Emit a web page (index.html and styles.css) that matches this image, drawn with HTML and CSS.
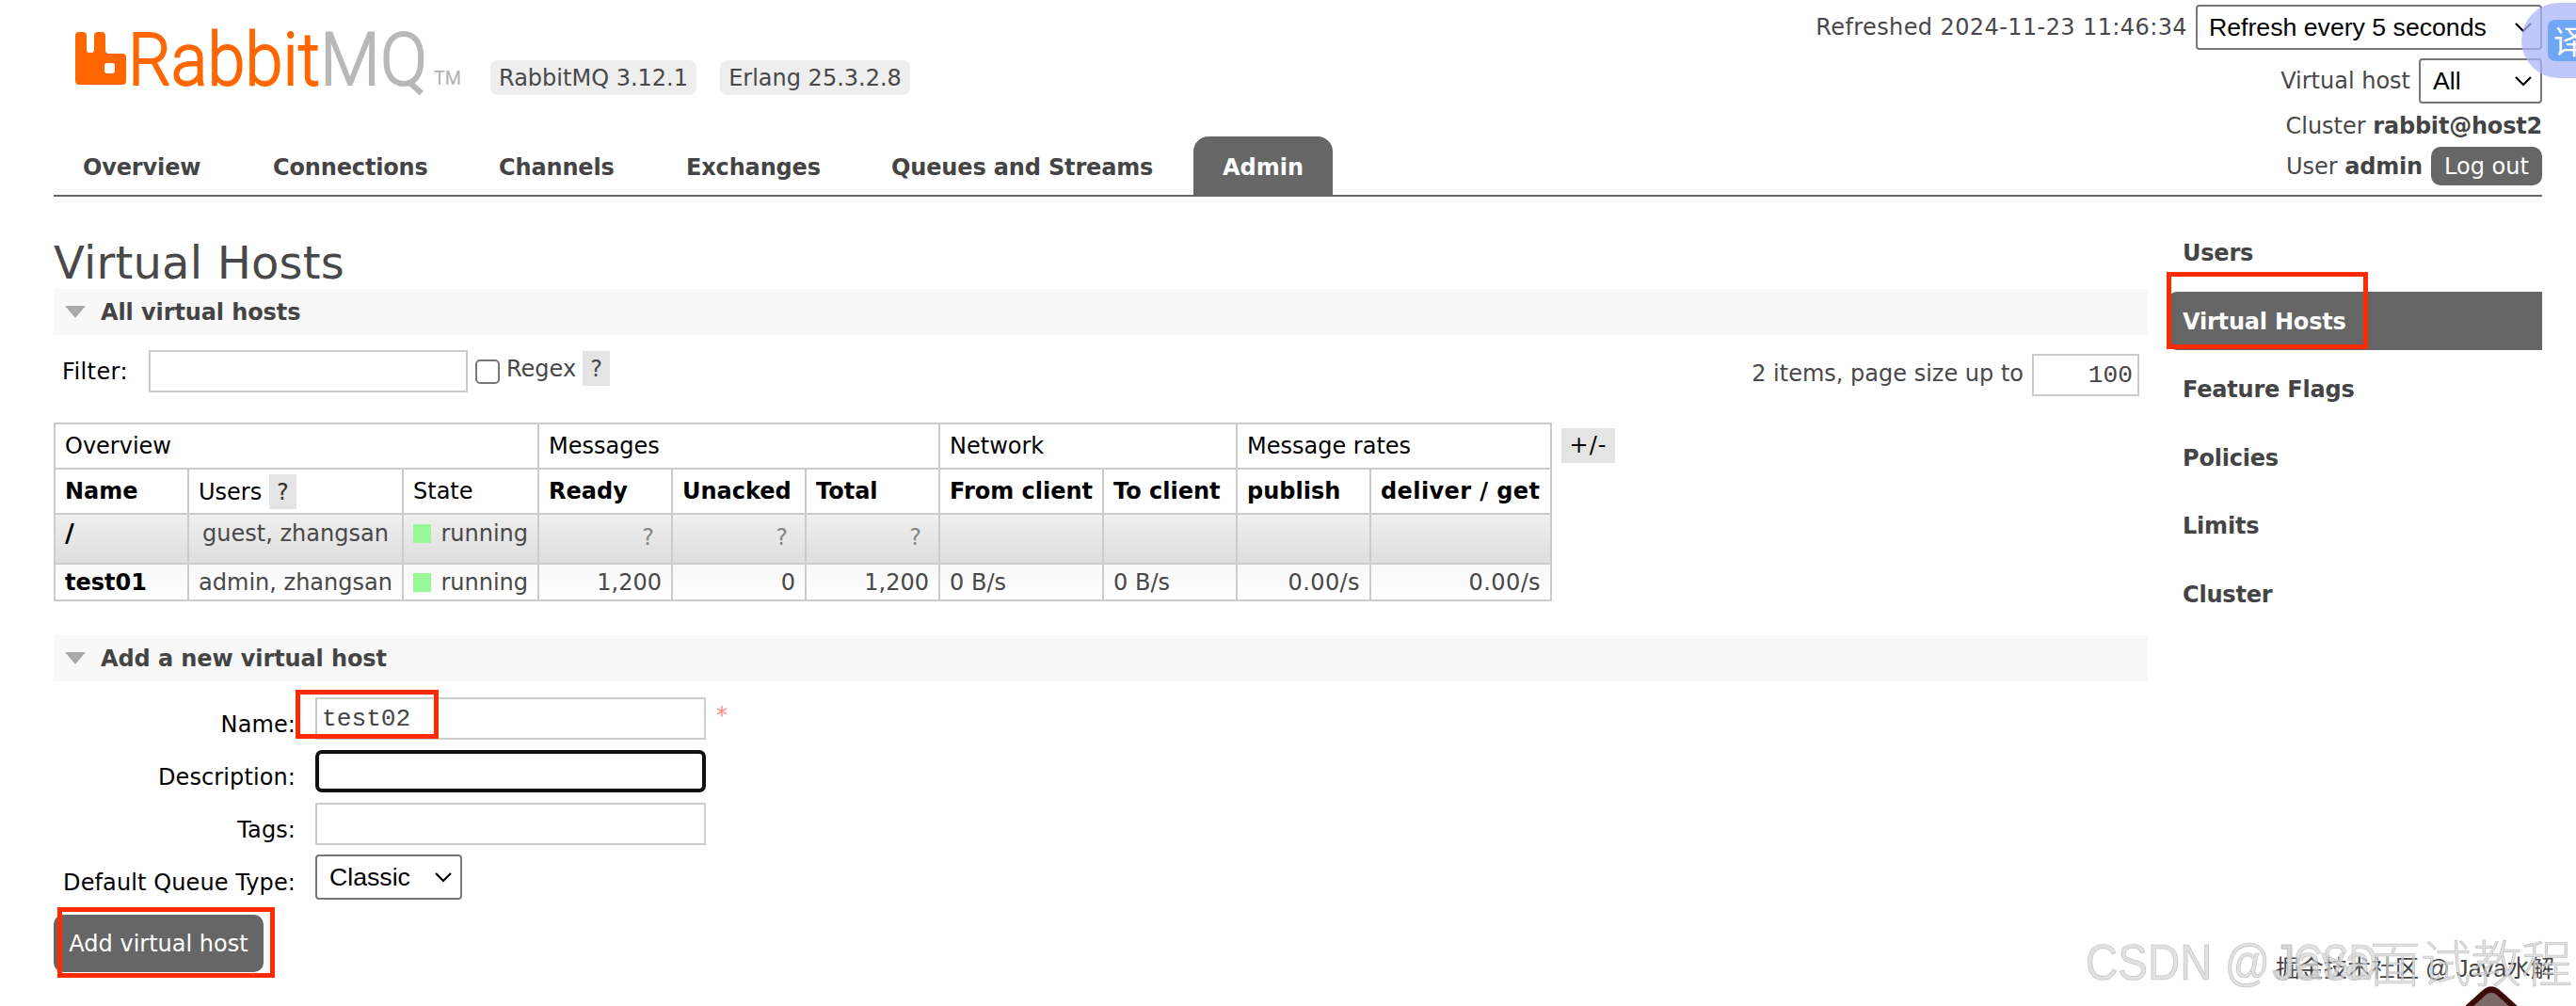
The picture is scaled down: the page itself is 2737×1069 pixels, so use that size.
FILE: index.html
```html
<!DOCTYPE html>
<html lang="en">
<head>
    <meta charset="UTF-8">
    <title>RabbitMQ Management</title>
    <link rel="stylesheet" href="styles.css">
</head>
<body>
    <header class="header">
        <div class="header-left">
            <div class="brand">
                <svg class="logo" width="432" height="70" viewBox="0 0 432 70">
                    <path fill="#ff6600" d="M4 4h4q4 0 4 4v15q0 3 3 3h2q3 0 3-3V8q0-4 4-4h4q4 0 4 4v15q0 4 4 4h14q4 0 4 4v25q0 4-4 4H4q-4 0-4-4V8q0-4 4-4zM34 37q-3 0-3 3v5q0 3 3 3h5q3 0 3-3v-5q0-3-3-3z"/>
                    <text class="logo-rabbit" x="56" y="60" textLength="204" lengthAdjust="spacingAndGlyphs">Rabbit</text>
                    <text class="logo-mq" x="260" y="60" textLength="114" lengthAdjust="spacingAndGlyphs">MQ</text>
                    <text class="logo-tm" x="381" y="60" textLength="29" lengthAdjust="spacingAndGlyphs">TM</text>
                </svg>
                <span class="version v1">RabbitMQ 3.12.1</span>
                <span class="version v2">Erlang 25.3.2.8</span>
            </div>
            <nav class="tabs">
                <a>Overview</a>
                <a>Connections</a>
                <a>Channels</a>
                <a>Exchanges</a>
                <a>Queues and Streams</a>
                <a class="selected">Admin</a>
            </nav>
        </div>
        <div class="login">
            <div class="login-row">
                <span class="refreshed">Refreshed 2024-11-23 11:46:34</span>
                <span class="select select-refresh">Refresh every 5 seconds
                    <svg width="18" height="12" viewBox="0 0 18 12"><path d="M1 2l8 8 8-8"/></svg>
                </span>
            </div>
            <div class="login-row row-vhost">
                <span>Virtual host</span>
                <span class="select select-vhost">All
                    <svg width="18" height="12" viewBox="0 0 18 12"><path d="M1 2l8 8 8-8"/></svg>
                </span>
            </div>
            <div class="login-row row-cluster"><span>Cluster <b>rabbit@host2</b></span></div>
            <div class="login-row row-user">
                <span>User <b>admin</b></span>
                <button class="btn btn-logout">Log out</button>
            </div>
        </div>
    </header>

    <div class="main">
        <main class="content">
            <h1>Virtual Hosts</h1>

            <h2><i class="arrow"></i>All virtual hosts</h2>
            <div class="filter">
                <label class="filter-label">Filter:</label>
                <input type="text" class="filter-input">
                <span class="checkbox"></span>
                <span class="regex">Regex</span>
                <span class="help">?</span>
                <div class="paging">
                    <span>2 items, page size up to</span>
                    <input type="text" class="page-size" value="100">
                </div>
            </div>

            <div class="list-wrap">
                <table class="list">
                    <colgroup>
                        <col class="c142"><col class="c228"><col class="c144"><col class="c142"><col class="c142">
                        <col class="c142"><col class="c174"><col class="c142"><col class="c142"><col class="c192">
                    </colgroup>
                    <tr class="groups">
                        <th colspan="3">Overview</th>
                        <th colspan="3">Messages</th>
                        <th colspan="2">Network</th>
                        <th colspan="2">Message rates</th>
                    </tr>
                    <tr class="heads">
                        <th class="sort">Name</th>
                        <th>Users <span class="help">?</span></th>
                        <th>State</th>
                        <th class="sort">Ready</th>
                        <th class="sort">Unacked</th>
                        <th class="sort">Total</th>
                        <th class="sort">From client</th>
                        <th class="sort">To client</th>
                        <th class="sort">publish</th>
                        <th class="sort wide">deliver / get</th>
                    </tr>
                    <tr class="alt">
                        <td class="name slash">/</td>
                        <td class="c">guest, zhangsan</td>
                        <td><span class="state"><i></i>running</span></td>
                        <td class="unknown">?</td>
                        <td class="unknown">?</td>
                        <td class="unknown">?</td>
                        <td></td>
                        <td></td>
                        <td></td>
                        <td></td>
                    </tr>
                    <tr class="plain">
                        <td class="name">test01</td>
                        <td class="c">admin, zhangsan</td>
                        <td><span class="state"><i></i>running</span></td>
                        <td class="r">1,200</td>
                        <td class="r">0</td>
                        <td class="r">1,200</td>
                        <td>0 B/s</td>
                        <td>0 B/s</td>
                        <td class="r rate">0.00/s</td>
                        <td class="r rate">0.00/s</td>
                    </tr>
                </table>
                <span class="plus-minus">+/-</span>
            </div>

            <h2 class="second"><i class="arrow"></i>Add a new virtual host</h2>
            <form class="form">
                <div class="form-row">
                    <label>Name:</label>
                    <input type="text" value="test02">
                    <span class="mand">*</span>
                    <div class="mark mark-name"></div>
                </div>
                <div class="form-row">
                    <label>Description:</label>
                    <input type="text" class="focused">
                </div>
                <div class="form-row">
                    <label>Tags:</label>
                    <input type="text">
                </div>
                <div class="form-row">
                    <label>Default Queue Type:</label>
                    <span class="select select-type">Classic
                        <svg width="18" height="12" viewBox="0 0 18 12"><path d="M1 2l8 8 8-8"/></svg>
                    </span>
                </div>
                <div class="submit">
                    <button type="button" class="btn btn-add">Add virtual host</button>
                    <div class="mark mark-add"></div>
                </div>
            </form>
        </main>

        <aside class="rhs">
            <a>Users</a>
            <a class="selected">Virtual Hosts<span class="mark mark-vhosts"></span></a>
            <a>Feature Flags</a>
            <a>Policies</a>
            <a>Limits</a>
            <a>Cluster</a>
        </aside>
    </div>

    <!-- floating translate button -->
    <div class="translate"><span>译</span></div>

    <!-- watermarks -->
    <svg class="watermark" width="537" height="99" viewBox="0 0 537 99">
        <text class="wm-small" x="218" y="68" textLength="296" lengthAdjust="spacingAndGlyphs">掘金技术社区 @ Java水解</text>
        <text class="wm-big" x="16" y="71" textLength="196" lengthAdjust="spacingAndGlyphs">CSDN @</text>
        <text class="wm-big" x="214" y="71" textLength="105" lengthAdjust="spacingAndGlyphs">Java</text>
        <text class="wm-big" x="216" y="71" textLength="110" lengthAdjust="spacingAndGlyphs">JCSD</text>
        <text class="wm-big" x="318" y="74" textLength="215" lengthAdjust="spacingAndGlyphs">面试教程</text>
        <path d="M416 106L438 86Q447 77 456 86L478 106" fill="#7d6a66" stroke="#3d0a08" stroke-width="6"/>
    </svg>
</body>
</html>
```

FILE: styles.css
```css
* {
    box-sizing: border-box;
}

body {
    margin: 0;
    padding: 0 36px 0 57px;
    width: 2737px;
    height: 1069px;
    overflow: hidden;
    position: relative;
    background-color: #fff;
    color: #484848;
    font-family: Verdana, "DejaVu Sans", sans-serif;
    font-size: 24px;
    line-height: 30px;
}

b {
    color: #444;
    letter-spacing: -0.2px;
}

.header {
    display: flex;
    justify-content: space-between;
    height: 209px;
    border-bottom: 2px solid #666;
}

.header-left {
    display: flex;
    flex-direction: column;
    justify-content: space-between;
    padding-top: 30px;
}

.brand {
    display: flex;
    align-items: flex-start;
    padding-left: 23px;
}

.logo {
    overflow: visible;
}

.logo-rabbit,
.logo-mq {
    font-family: Roboto, sans-serif;
    font-weight: 300;
    font-size: 78px;
    fill: #ff6600;
    stroke: #ff6600;
    stroke-width: 1.8;
}

.logo-mq {
    fill: #b8b8b8;
    stroke: #b8b8b8;
}

.logo-tm {
    font-family: Roboto, sans-serif;
    font-weight: 400;
    font-size: 21px;
    fill: #b0b0b0;
}

.version {
    height: 37px;
    margin: 34px 0 0 9px;
    line-height: 39px;
    text-align: center;
    white-space: nowrap;
    border-radius: 8px;
    background-color: #eee;
}

.v1 {
    width: 219px;
}

.v2 {
    width: 202px;
    margin-left: 25px;
}

.tabs {
    display: grid;
    grid-template-columns: 202px 240px 199px 218px 352px 148px;
}

.tabs a {
    height: 62px;
    padding-left: 31px;
    line-height: 66px;
    font-weight: bold;
    letter-spacing: -0.15px;
    color: #444;
    white-space: nowrap;
}

.tabs .selected {
    border-radius: 16px 16px 0 0;
    background-color: #666;
    color: #fff;
    letter-spacing: 0;
}

.login {
    display: flex;
    flex-direction: column;
    align-items: flex-end;
    padding-top: 5px;
}

.login-row {
    display: flex;
    align-items: center;
    gap: 9px;
}

.refreshed {
    letter-spacing: 0.4px;
}

.row-vhost {
    margin-top: 9px;
}

.row-cluster {
    margin-top: 9px;
}

.row-user {
    margin-top: 7px;
}

.select {
    display: flex;
    align-items: center;
    justify-content: space-between;
    height: 48px;
    padding: 0 9px 0 13px;
    border: 2px solid #767676;
    border-radius: 4px;
    background-color: #fff;
    color: #000;
    font-family: Arial, "Liberation Sans", sans-serif;
    font-size: 26.67px;
    white-space: nowrap;
}

.select svg path {
    fill: none;
    stroke: #000;
    stroke-width: 2.2;
}

.select-refresh {
    width: 368px;
    padding-left: 12px;
}

.select-vhost {
    width: 131px;
}

.select-type {
    width: 156px;
}

.btn {
    border: none;
    border-radius: 10px;
    background-color: #666;
    color: #fff;
    font-family: inherit;
    font-size: 24px;
    white-space: nowrap;
    padding: 0;
}

.btn-logout {
    width: 118px;
    height: 41px;
}

.btn-add {
    width: 223px;
    height: 61px;
}

.main {
    display: flex;
    justify-content: space-between;
}

.content {
    width: 2225px;
}

h1 {
    margin: 44px 0 2px;
    font-size: 48px;
    line-height: 52px;
    font-weight: normal;
    letter-spacing: 0.2px;
}

h2 {
    display: flex;
    align-items: center;
    gap: 16px;
    height: 49px;
    margin: 0;
    padding-left: 12px;
    background-color: #f8f8f8;
    font-size: 24px;
    letter-spacing: -0.1px;
    color: #444;
}

h2.second {
    margin-top: 36px;
}

.arrow {
    border: 11px solid transparent;
    border-top: 13px solid #aaa;
    border-bottom: none;
}

input {
    border: 2px solid #ccc;
    padding: 0 5px;
    background-color: #fff;
    font-family: "Courier New", "Liberation Mono", monospace;
    font-size: 26.2px;
    color: #444;
    outline: none;
}

.filter {
    display: flex;
    align-items: flex-start;
    height: 93px;
    padding: 16px 9px 0;
}

.filter-label {
    width: 92px;
    padding-top: 8px;
    color: #000;
    letter-spacing: 0.4px;
}

.filter-input {
    width: 339px;
    height: 45px;
}

.checkbox {
    width: 26px;
    height: 26px;
    margin: 10px 7px 0 8px;
    border: 2px solid #767676;
    border-radius: 5px;
}

.regex {
    width: 81px;
    padding-top: 5px;
}

.help {
    display: inline-block;
    width: 29px;
    height: 37px;
    line-height: 38px;
    margin-top: 1px;
    text-align: center;
    background-color: #e4e4e4;
}

.paging {
    display: flex;
    gap: 9px;
    margin: 4px 0 0 auto;
    line-height: 42px;
}

.page-size {
    width: 114px;
    height: 45px;
    text-align: right;
}

.list-wrap {
    display: flex;
    align-items: flex-start;
    gap: 10px;
}

.list {
    width: 1592px;
    table-layout: fixed;
    border-collapse: collapse;
}

.c142 { width: 142px; }
.c144 { width: 144px; }
.c174 { width: 174px; }
.c192 { width: 192px; }
.c228 { width: 228px; }

.list th,
.list td {
    padding: 0 10px;
    border: 2px solid #ccc;
    text-align: left;
    white-space: nowrap;
}

.list th {
    font-weight: normal;
    color: #000;
}

.list th.sort,
.list .name {
    font-weight: bold;
    color: #000;
}

.list th.wide {
    letter-spacing: 0.4px;
}

.list .help {
    margin: 0;
    color: #333;
}

.groups,
.heads {
    height: 48px;
}

.alt {
    height: 53px;
    background-image: linear-gradient(#f0f0f0, #ddd);
}

.alt td {
    padding-bottom: 12px;
}

.list .slash {
    font-size: 27px;
}

.plain {
    height: 39px;
    background-image: linear-gradient(#f8f8f8, #fff);
}

.list .c {
    text-align: center;
}

.list .r {
    text-align: right;
}

.list .rate {
    letter-spacing: 0.4px;
}

.list .unknown {
    padding: 0 18px 3px 0;
    text-align: right;
    color: #888;
}

.state {
    display: flex;
    align-items: center;
    gap: 10px;
}

.state i {
    width: 20px;
    height: 20px;
    background-color: #98f898;
}

.plus-minus {
    width: 57px;
    height: 37px;
    margin-top: 6px;
    line-height: 37px;
    text-align: center;
    letter-spacing: 1px;
    background-color: #e4e4e4;
    color: #000;
}

.form {
    padding-top: 17px;
}

.form-row {
    position: relative;
    display: flex;
    align-items: flex-start;
    height: 56px;
}

.form-row label {
    width: 257px;
    padding-top: 14px;
    margin-right: 21px;
    text-align: right;
    letter-spacing: 0.1px;
    color: #000;
    white-space: nowrap;
}

.form-row input {
    width: 415px;
    height: 45px;
}

.form-row .focused {
    border: 4px solid #101010;
    border-radius: 7px;
}

.form-row .select {
    margin-top: -1px;
}

.mand {
    margin-left: 11px;
    padding-top: 4px;
    color: #f88;
}

.submit {
    position: relative;
    padding-top: 7px;
}

/* red highlight frames */
.mark {
    position: absolute;
    border: 5px solid #ff2a00;
}

.mark-name {
    left: 257px;
    top: -8px;
    width: 152px;
    height: 52px;
}

.mark-add {
    left: 4px;
    top: -1px;
    width: 231px;
    height: 75px;
}

.mark-vhosts {
    left: -1px;
    top: -21px;
    width: 214px;
    height: 82px;
}

.rhs {
    display: flex;
    flex-direction: column;
    gap: 10.6px;
    width: 398px;
    padding-top: 28px;
}

.rhs a {
    position: relative;
    height: 62px;
    padding-left: 16px;
    line-height: 65px;
    font-weight: bold;
    letter-spacing: -0.2px;
    color: #444;
}

.rhs .selected {
    border-radius: 10px 0 0 10px;
    background-color: #666;
    color: #fff;
}

.translate {
    position: absolute;
    right: 0;
    top: 3px;
    width: 58px;
    height: 80px;
    padding: 18px 0 0 28px;
    overflow: hidden;
    border-radius: 40px 0 0 40px;
    background-color: rgba(170, 182, 247, 0.75);
}

.translate span {
    display: block;
    width: 44px;
    height: 44px;
    padding-left: 6px;
    line-height: 44px;
    border-radius: 8px;
    background-color: #6fa6f5;
    color: #fff;
    font-family: "Noto Sans CJK SC", sans-serif;
    font-size: 34px;
}

.watermark {
    position: absolute;
    left: 2200px;
    top: 970px;
}

.wm-big {
    font-family: "Liberation Sans", "Noto Sans CJK SC", sans-serif;
    font-size: 53px;
    font-weight: 300;
    fill: rgba(215, 215, 215, 0.75);
    stroke: rgba(150, 150, 150, 0.5);
    stroke-width: 0.7;
}

.wm-small {
    font-family: "Liberation Sans", "Noto Sans CJK SC", sans-serif;
    font-size: 25px;
    fill: #444;
}
```
